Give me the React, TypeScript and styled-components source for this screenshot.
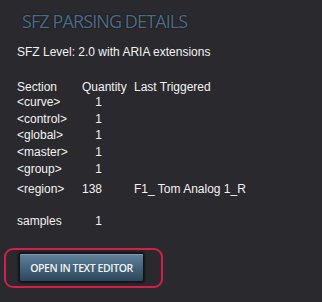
import React from "react";
import styled, { createGlobalStyle } from "styled-components";

const Global = createGlobalStyle`
  html, body { margin: 0; padding: 0; background: #2a292e; }
  body { width: 322px; height: 302px; overflow: hidden; }
`;

const Panel = styled.div`
  width: 322px;
  height: 302px;
  box-sizing: border-box;
  background: #2a292e;
  padding: 10px 0 0 17px;
  font-family: "Liberation Sans", Arial, sans-serif;
  color: #f2f2f2;
  font-size: 12px;
`;

const Title = styled.h1`
  margin: 0 0 0 5px;
  font-family: "Open Sans", sans-serif;
  font-weight: 400;
  font-size: 18px;
  line-height: 22px;
  letter-spacing: -0.9px;
  color: #4d6b87;
  text-shadow: 0 0 2px rgba(0, 0, 0, 0.7);
`;

const Level = styled.div`
  margin-top: 13px;
  line-height: 14px;
`;

const Table = styled.div`
  margin-top: 21px;
  display: flex;
  flex-direction: column;
`;

const Row = styled.div<{ $gap?: number; $h?: number }>`
  display: grid;
  grid-template-columns: 65px 52px auto;
  height: ${(p) => p.$h ?? 16.7}px;
  line-height: 14px;
  margin-top: ${(p) => p.$gap ?? 0}px;
  white-space: nowrap;
`;

const Qty = styled.div`
  width: 20px;
  text-align: right;
`;

const Highlight = styled.div`
  margin: 17px 0 0 -13px;
  width: 159px;
  height: 40px;
  box-sizing: border-box;
  border: 2px solid #d21f4b;
  border-radius: 9px;
  display: flex;
  align-items: center;
  padding-left: 13px;
`;

const Button = styled.button`
  width: 125px;
  height: 29px;
  padding: 0;
  border: 1px solid #0c1319;
  border-radius: 2px;
  background: linear-gradient(#61819c 0%, #47667f 45%, #2b465b 100%);
  box-shadow: inset 0 1px 0 rgba(255, 255, 255, 0.22), 0 0 2px 1px rgba(0, 0, 0, 0.55);
  color: #f0f4f7;
  font-family: "Open Sans", sans-serif;
  font-weight: 600;
  font-size: 10.5px;
  letter-spacing: -0.4px;
  cursor: pointer;
`;

const rows: [string, string][] = [
  ["<curve>", "1"],
  ["<control>", "1"],
  ["<global>", "1"],
  ["<master>", "1"],
  ["<group>", "1"],
];

export default function App() {
  return (
    <>
      <Global />
      <Panel>
        <Title>SFZ PARSING DETAILS</Title>
        <Level>SFZ Level: 2.0 with ARIA extensions</Level>
        <Table>
          <Row $h={15}>
            <div>Section</div>
            <div>Quantity</div>
            <div>Last Triggered</div>
          </Row>
          {rows.map(([s, q]) => (
            <Row key={s}>
              <div>{s}</div>
              <Qty>{q}</Qty>
              <div />
            </Row>
          ))}
          <Row $gap={3.5}>
            <div>&lt;region&gt;</div>
            <Qty>138</Qty>
            <div>F1_ Tom Analog 1_R</div>
          </Row>
          <Row $gap={15.3}>
            <div>samples</div>
            <Qty>1</Qty>
            <div />
          </Row>
        </Table>
        <Highlight>
          <Button>OPEN IN TEXT EDITOR</Button>
        </Highlight>
      </Panel>
    </>
  );
}
